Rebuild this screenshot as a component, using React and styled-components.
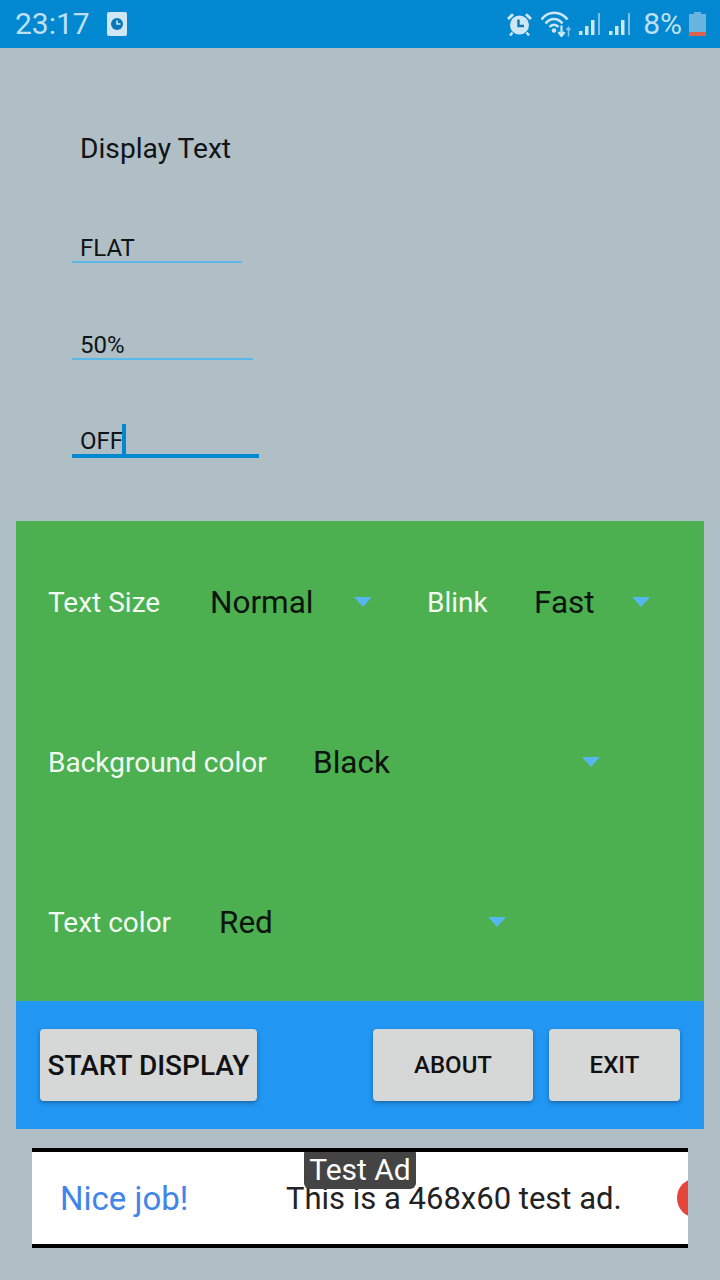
import React from "react";
import styled, { createGlobalStyle } from "styled-components";

const GlobalStyle = createGlobalStyle`
  html, body {
    margin: 0;
    padding: 0;
    background: #b0bec5;
  }
  * {
    box-sizing: border-box;
  }
`;

const Page = styled.div`
  width: 720px;
  height: 1280px;
  overflow: hidden;
  background: #b0bec5;
  font-family: Roboto, "Liberation Sans", sans-serif;
  display: flex;
  flex-direction: column;
`;

const StatusBar = styled.div`
  height: 48px;
  flex-shrink: 0;
  background: #0288d1;
  color: #bfe0f3;
  display: flex;
  align-items: center;
  padding: 0 14px 0 15px;
`;

const Time = styled.span`
  font-size: 30px;
  line-height: 48px;
  width: 92px;
`;

const StatusRight = styled.div`
  margin-left: auto;
  display: flex;
  align-items: center;
  gap: 8px;
`;

const Percent = styled.span`
  font-size: 30px;
  line-height: 48px;
  margin: 0 -1px 0 4px;
`;

const Form = styled.div`
  height: 473px;
  flex-shrink: 0;
  padding: 83px 0 0 72px;
  display: flex;
  flex-direction: column;
  align-items: flex-start;
  gap: 68px;
  color: #0f1417;
`;

const Title = styled.div`
  font-size: 28.2px;
  line-height: 35px;
  padding-left: 8px;
`;

const Field = styled.div`
  width: ${(p) => p.$width}px;
  height: ${(p) => (p.$focused ? 31 : 29)}px;
  margin-top: ${(p) => (p.$focused ? -1 : 0)}px;
  padding-left: 8px;
  font-size: 24px;
  line-height: 28px;
  border-bottom: ${(p) => (p.$focused ? "4px solid #0288d1" : "2px solid #5ab9e6")};
  display: flex;
`;

const Caret = styled.span`
  width: 4px;
  height: 31px;
  margin-top: -3px;
  margin-left: -1px;
  background: #0288d1;
`;

const Panel = styled.div`
  margin: 0 16px;
  height: 480px;
  flex-shrink: 0;
  background: #4caf50;
  display: flex;
  flex-direction: column;
`;

const Row = styled.div`
  height: 160px;
  padding: 3px 0 0 32px;
  display: flex;
  align-items: center;
`;

const Label = styled.div`
  width: ${(p) => p.$width}px;
  margin-left: ${(p) => p.$offset || 0}px;
  color: #f2fbf2;
  font-size: 28px;
  line-height: 36px;
`;

const Spinner = styled.div`
  width: ${(p) => p.$width}px;
  display: flex;
  align-items: center;
  justify-content: space-between;
  color: #0d140d;
  font-size: 31.5px;
  line-height: 40px;
  margin-left: -1px;
`;

const Arrow = styled.span`
  width: 0;
  height: 0;
  margin-top: -2px;
  border-left: 9px solid transparent;
  border-right: 9px solid transparent;
  border-top: 10px solid #58b6ee;
`;

const ButtonBar = styled.div`
  margin: 0 16px;
  height: 128px;
  flex-shrink: 0;
  padding: 28px 24px;
  background: #2196f3;
  display: flex;
  justify-content: space-between;
`;

const ButtonGroup = styled.div`
  display: flex;
  gap: 16px;
`;

const Button = styled.div`
  width: ${(p) => p.$width}px;
  height: 72px;
  background: #d6d7d7;
  border-radius: 4px;
  box-shadow: 0 2px 4px rgba(0, 0, 0, 0.3);
  color: #111;
  font-size: ${(p) => p.$size}px;
  font-weight: 500;
  display: flex;
  align-items: center;
  justify-content: center;
  white-space: nowrap;
`;

const AdBanner = styled.div`
  position: relative;
  margin: 19px 32px 0;
  height: 100px;
  background: #fff;
  border-top: 4px solid #000;
  border-bottom: 4px solid #000;
  overflow: hidden;
  display: flex;
  align-items: center;
  padding-left: 28px;
`;

const AdBadge = styled.div`
  position: absolute;
  top: -4px;
  left: 272px;
  width: 112px;
  height: 41px;
  border-radius: 6px;
  background: #444;
  color: #fff;
  font-size: 30px;
  line-height: 43px;
  text-align: center;
`;

const AdHeadline = styled.span`
  flex-shrink: 0;
  width: 226px;
  color: #4285e8;
  font-size: 33px;
`;

const AdText = styled.span`
  flex-shrink: 0;
  width: 391px;
  color: #222;
  font-size: 31px;
  white-space: nowrap;
`;

const AdDot = styled.span`
  flex-shrink: 0;
  width: 40px;
  height: 40px;
  border-radius: 50%;
  background: #e5453b;
`;

const ClockNotice = () => (
  <svg width="20" height="24" viewBox="0 0 20 24">
    <rect width="20" height="24" rx="2" fill="#cfe6f5" />
    <circle cx="10" cy="12" r="6" fill="#0a78b8" />
    <path d="M10 8.5V12h3.5" fill="none" stroke="#cfe6f5" strokeWidth="1.6" />
  </svg>
);

const AlarmIcon = () => (
  <svg width="27" height="24" viewBox="0 0 27 24">
    <circle cx="13.5" cy="13" r="9.5" fill="#cfe6f5" />
    <path d="M12.5 7.5V14h5.5" fill="none" stroke="#0a78b8" strokeWidth="2.4" />
    <path d="M1 6L6 1.2 8 3.2 3 8ZM26 6L21 1.2 19 3.2 24 8Z" fill="#cfe6f5" />
    <path d="M6.5 20.5L4 23.5M20.5 20.5L23 23.5" stroke="#cfe6f5" strokeWidth="2.4" />
  </svg>
);

const WifiIcon = () => (
  <svg width="30" height="26" viewBox="0 0 30 26">
    <g fill="none" stroke="#cfe6f5" strokeWidth="2.6">
      <path d="M0.5 8.5C7-.5 19-.5 26.5 8.5" />
      <path d="M4.5 12.5C9.5 6.5 16.5 6.5 21.5 12.5" />
      <path d="M8.5 16C11 13 15 13 17.5 16" />
    </g>
    <circle cx="13" cy="19.5" r="2.3" fill="#cfe6f5" />
    <path d="M20.5 14.5v10M17.5 21l3 4 3-4" fill="none" stroke="#cfe6f5" strokeWidth="2.2" />
    <path d="M27.5 25.5v-9M25.5 19l2-2.5 2 2.5" fill="none" stroke="#8cc6e8" strokeWidth="1.5" />
  </svg>
);

const SignalIcon = () => (
  <svg width="22" height="24" viewBox="0 0 22 24">
    <rect x="0" y="19" width="3.5" height="4" fill="#cfe6f5" />
    <rect x="6" y="14" width="3.5" height="9" fill="#cfe6f5" />
    <rect x="12" y="8" width="3.5" height="15" fill="#cfe6f5" />
    <rect x="19" y="1" width="2" height="22" fill="#7fc0e6" />
  </svg>
);

const BatteryIcon = () => (
  <svg width="17" height="24" viewBox="0 0 17 24">
    <rect x="5" y="0" width="7" height="3" fill="#6ab4df" />
    <rect x="0" y="2" width="17" height="18" fill="#6ab4df" />
    <rect x="0" y="20" width="17" height="4" fill="#d9634f" />
  </svg>
);

function App() {
  return (
    <Page>
      <GlobalStyle />
      <StatusBar>
        <Time>23:17</Time>
        <ClockNotice />
        <StatusRight>
          <AlarmIcon />
          <WifiIcon />
          <SignalIcon />
          <SignalIcon />
          <Percent>8%</Percent>
          <BatteryIcon />
        </StatusRight>
      </StatusBar>

      <Form>
        <Title>Display Text</Title>
        <Field $width={170}>FLAT</Field>
        <Field $width={181}>50%</Field>
        <Field $width={187} $focused>
          OFF
          <Caret />
        </Field>
      </Form>

      <Panel>
        <Row>
          <Label $width={163}>Text Size</Label>
          <Spinner $width={162}>
            Normal
            <Arrow />
          </Spinner>
          <Label $width={108} $offset={55}>
            Blink
          </Label>
          <Spinner $width={116}>
            Fast
            <Arrow />
          </Spinner>
        </Row>
        <Row>
          <Label $width={266}>Background color</Label>
          <Spinner $width={287}>
            Black
            <Arrow />
          </Spinner>
        </Row>
        <Row>
          <Label $width={172}>Text color</Label>
          <Spinner $width={287}>
            Red
            <Arrow />
          </Spinner>
        </Row>
      </Panel>

      <ButtonBar>
        <Button $width={217} $size={28}>
          START DISPLAY
        </Button>
        <ButtonGroup>
          <Button $width={160} $size={24}>
            ABOUT
          </Button>
          <Button $width={131} $size={24}>
            EXIT
          </Button>
        </ButtonGroup>
      </ButtonBar>

      <AdBanner>
        <AdBadge>Test Ad</AdBadge>
        <AdHeadline>Nice job!</AdHeadline>
        <AdText>This is a 468x60 test ad.</AdText>
        <AdDot />
      </AdBanner>
    </Page>
  );
}

export default App;
